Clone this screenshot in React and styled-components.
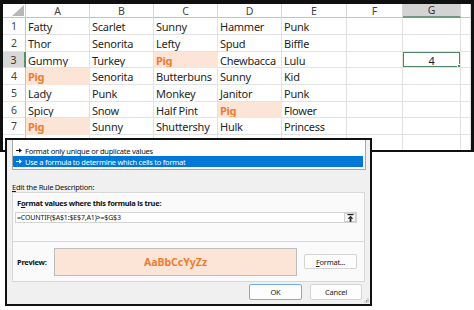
import styled, { createGlobalStyle, css } from "styled-components";

const COLS = [
  { key: "A", width: 64 },
  { key: "B", width: 64 },
  { key: "C", width: 64 },
  { key: "D", width: 64 },
  { key: "E", width: 65 },
  { key: "F", width: 56 },
  { key: "G", width: 58 },
  { key: "", width: 10 },
];

const DATA = [
  ["Fatty", "Scarlet", "Sunny", "Hammer", "Punk"],
  ["Thor", "Senorita", "Lefty", "Spud", "Biffle"],
  ["Gummy", "Turkey", "Pig", "Chewbacca", "Lulu"],
  ["Pig", "Senorita", "Butterbuns", "Sunny", "Kid"],
  ["Lady", "Punk", "Monkey", "Janitor", "Punk"],
  ["Spicy", "Snow", "Half Pint", "Pig", "Flower"],
  ["Pig", "Sunny", "Shuttershy", "Hulk", "Princess"],
  ["", "", "", "", ""],
];

const THRESHOLD = 4; // $G$3

// same rule as the dialog: =COUNTIF($A$1:$E$7,A1)>=$G$3
const counts = {};
DATA.flat().forEach((v) => {
  if (v) counts[v] = (counts[v] || 0) + 1;
});

function ListArrow() {
  return (
    <svg width="6" height="5" viewBox="0 0 6 5">
      <rect x="0" y="2" width="3" height="1" fill="currentColor" />
      <path d="M3 0.3 L6 2.5 L3 4.7 Z" fill="currentColor" />
    </svg>
  );
}

function CollapseIcon() {
  return (
    <svg width="7" height="8" viewBox="0 0 7 8">
      <rect x="0.5" y="0" width="6" height="1.2" fill="#222" />
      <path d="M3.5 1.8 L6.3 4.8 L0.7 4.8 Z" fill="#222" />
      <rect x="2.6" y="4.6" width="1.8" height="3.2" fill="#222" />
    </svg>
  );
}

function App() {
  return (
    <>
      <GlobalStyle />
      <Page>
        <Sheet>
          <Grid>
            <Corner />
            {COLS.map((c) => (
              <ColHead key={c.key || "x"} $active={c.key === "G"}>
                {c.key}
              </ColHead>
            ))}
            {DATA.map((row, r) => (
              <Row key={r} row={row} index={r} />
            ))}
          </Grid>
        </Sheet>

        <Dialog>
          <RuleList>
            <RuleItem>
              <ListArrow />
              Format only unique or duplicate values
            </RuleItem>
            <RuleItem $selected>
              <ListArrow />
              Use a formula to determine which cells to format
            </RuleItem>
          </RuleList>

          <SectionLabel>
            <u>E</u>dit the Rule Description:
          </SectionLabel>

          <Group>
            <FormulaSection>
              <GroupTitle>
                F<u>o</u>rmat values where this formula is true:
              </GroupTitle>
              <FormulaInput>
                <span>=COUNTIF($A$1:$E$7,A1)&gt;=$G$3</span>
                <CollapseButton>
                  <CollapseIcon />
                </CollapseButton>
              </FormulaInput>
            </FormulaSection>
            <PreviewSection>
              <PreviewLabel>Preview:</PreviewLabel>
              <PreviewBox>AaBbCcYyZz</PreviewBox>
              <Button $w={53}>
                <u>F</u>ormat...
              </Button>
            </PreviewSection>
          </Group>

          <Footer>
            <Button $w={53} $primary>
              OK
            </Button>
            <Button $w={52}>Cancel</Button>
          </Footer>
          <Grip width="5" height="5" viewBox="0 0 5 5">
            <rect x="3.5" y="0.5" width="1" height="1" fill="#888" />
            <rect x="2" y="2" width="1" height="1" fill="#888" />
            <rect x="3.5" y="2" width="1" height="1" fill="#888" />
            <rect x="0.5" y="3.5" width="1" height="1" fill="#888" />
            <rect x="2" y="3.5" width="1" height="1" fill="#888" />
            <rect x="3.5" y="3.5" width="1" height="1" fill="#888" />
          </Grip>
        </Dialog>
      </Page>
    </>
  );
}

function Row({ row, index }) {
  const rowNum = index + 1;
  return (
    <>
      <RowHead $active={rowNum === 3}>{rowNum}</RowHead>
      {row.map((v, c) => (
        <Cell key={c} $hit={v && counts[v] >= THRESHOLD}>
          {v}
        </Cell>
      ))}
      <Cell />
      {rowNum === 3 ? <SelectedCell>{THRESHOLD}</SelectedCell> : <Cell />}
      <Cell />
    </>
  );
}

export default App;

const GlobalStyle = createGlobalStyle`
  html, body {
    margin: 0;
    padding: 0;
    background: #fff;
  }
  body {
    font-family: "Noto Sans", "Open Sans", "DejaVu Sans", sans-serif;
  }
`;

const Page = styled.div`
  width: 474px;
  height: 310px;
  overflow: hidden;
  background: #fff;
`;

const Sheet = styled.div`
  box-sizing: border-box;
  width: 474px;
  height: 152px;
  border: solid #101010;
  border-width: 4px 3px 2px 3px;
  overflow: hidden;
  background: #fff;
`;

const Grid = styled.div`
  display: grid;
  grid-template-columns: 23px ${COLS.map((c) => c.width + "px").join(" ")};
  grid-template-rows: 14px 17px 17px 16px 17px 17px 16px 17px 17px;
  font-size: 11px;
  color: #1f1f1f;
`;

const cellBase = css`
  box-sizing: border-box;
  display: flex;
  align-items: center;
  white-space: nowrap;
  overflow: hidden;
`;

const Corner = styled.div`
  ${cellBase};
  position: relative;
  background: #fff;
  border-right: 1px solid #d0d0d0;
  border-bottom: 1px solid #c4c4c4;

  &::after {
    content: "";
    position: absolute;
    right: 1px;
    bottom: 1px;
    width: 12px;
    height: 11px;
    background: #b8b8b8;
    clip-path: polygon(100% 0, 100% 100%, 0 100%);
  }
`;

const ColHead = styled.div`
  ${cellBase};
  justify-content: center;
  font-size: 10.5px;
  color: #444;
  background: #fff;
  border-right: 1px solid #d8d8d8;
  border-bottom: 1px solid #c4c4c4;

  ${(p) =>
    p.$active &&
    css`
      background: #d3d3d3;
      border-bottom: 2px solid #6f9a82;
      color: #333;
    `}
`;

const RowHead = styled.div`
  ${cellBase};
  justify-content: center;
  font-size: 10.5px;
  color: #444;
  background: #fff;
  border-right: 1px solid #c4c4c4;
  border-bottom: 1px solid #e4e4e4;

  ${(p) =>
    p.$active &&
    css`
      background: #d8d8d8;
      border-right: 2px solid #5a8a70;
      color: #333;
    `}
`;

const Cell = styled.div`
  ${cellBase};
  padding: 1px 2px 0;
  letter-spacing: -0.25px;
  border-right: 1px solid #e2e2e2;
  border-bottom: 1px solid #e2e2e2;

  ${(p) =>
    p.$hit &&
    css`
      background: #fce4d6;
      color: #ed7d31;
      font-weight: 700;
      border-color: #fce4d6;
    `}
`;

const SelectedCell = styled(Cell)`
  position: relative;
  justify-content: center;

  &::after {
    content: "";
    position: absolute;
    inset: -1px -1px -1px -1px;
    border: 2px solid #4f8468;
  }
  &::before {
    content: "";
    position: absolute;
    right: -3px;
    bottom: -3px;
    width: 4px;
    height: 4px;
    background: #4f8468;
    border: 1px solid #fff;
    z-index: 1;
  }
`;

const Dialog = styled.div`
  position: relative;
  z-index: 2;
  box-sizing: border-box;
  width: 367px;
  height: 168px;
  margin: -14px 0 0 5px;
  padding: 0 4px 0 5px;
  display: flex;
  flex-direction: column;
  border: 2px solid #111;
  background: #f0f0f0;
  font-size: 7.5px;
  letter-spacing: -0.25px;
  color: #111;

  u {
    text-decoration-thickness: 0.7px;
    text-underline-offset: 1px;
  }
`;

const RuleList = styled.div`
  box-sizing: border-box;
  height: 30px;
  padding: 5px 2px 2px 0;
  border: 1px solid #a9a9a9;
  border-top: none;
  background: #fff;
`;

const RuleItem = styled.div`
  height: 11px;
  display: flex;
  align-items: center;
  gap: 3px;
  padding-left: 3px;
  color: #111;

  ${(p) =>
    p.$selected &&
    css`
      background: #0078d7;
      color: #fff;
    `}
`;

const SectionLabel = styled.div`
  height: 10px;
  line-height: 10px;
  margin-top: 12px;
`;

const Group = styled.div`
  box-sizing: border-box;
  height: 90px;
  margin-right: 1px;
  display: flex;
  flex-direction: column;
  border: 1px solid #d8d8d8;
  background: #fafafa;
`;

const FormulaSection = styled.div`
  height: 43px;
  padding: 5px 7px 0 2px;
`;

const GroupTitle = styled.div`
  height: 10px;
  line-height: 10px;
  padding-left: 2px;
  font-weight: 700;
`;

const FormulaInput = styled.div`
  box-sizing: border-box;
  height: 11px;
  margin-top: 4px;
  padding: 0 0 0 1px;
  display: flex;
  align-items: center;
  justify-content: space-between;
  border: 1px solid #d4d4d4;
  background: #fff;
  font-size: 7px;
  letter-spacing: -0.15px;
`;

const CollapseButton = styled.div`
  box-sizing: border-box;
  width: 12px;
  height: 9px;
  display: flex;
  align-items: center;
  justify-content: center;
  border: 1px solid #cfcfcf;
  background: #f7f7f7;
`;

const PreviewSection = styled.div`
  flex: 1;
  display: flex;
  align-items: center;
  padding: 0 7px 0 4px;
  border-top: 1px solid #d8d8d8;
`;

const PreviewLabel = styled.div`
  width: 37px;
  font-weight: 700;
`;

const PreviewBox = styled.div`
  box-sizing: border-box;
  width: 243px;
  height: 28px;
  margin-right: 7px;
  display: flex;
  align-items: center;
  justify-content: center;
  border: 1px solid #bdbdbd;
  background: #fce4d6;
  color: #ed7d31;
  font-size: 10.5px;
  font-weight: 700;
  letter-spacing: 0;
`;

const Button = styled.div`
  box-sizing: border-box;
  width: ${(p) => p.$w}px;
  height: 15px;
  display: flex;
  align-items: center;
  justify-content: center;
  border: 1px solid ${(p) => (p.$primary ? "#79ade2" : "#d4d4d4")};
  border-radius: 2px;
  background: #fdfdfd;
  color: #1a1a1a;
`;

const Footer = styled.div`
  display: flex;
  justify-content: flex-end;
  gap: 8px;
  padding: 2px 4px 0 0;

  ${Button} {
    height: 16px;
  }
`;

const Grip = styled.svg`
  position: absolute;
  right: 1px;
  bottom: 1px;
`;
